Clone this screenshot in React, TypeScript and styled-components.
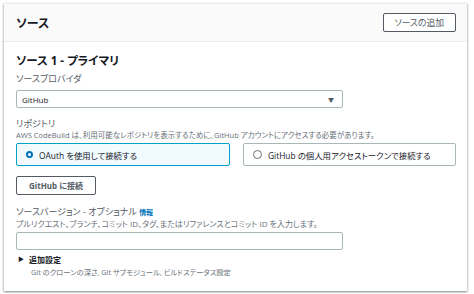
import { createGlobalStyle, styled } from 'styled-components';

const GlobalStyle = createGlobalStyle`
    html, body {
        margin: 0;
        padding: 0;
        background: #ffffff;
    }
    body {
        font-family: 'Open Sans', 'Noto Sans CJK JP', sans-serif;
        font-feature-settings: 'palt';
        color: #16191f;
    }
`;

interface TileProps {
    selected?: boolean;
}

export default function App() {
    return (
        <Page>
            <GlobalStyle />
            <Panel>
                <Header>
                    <Title>ソース</Title>
                    <Button>ソースの追加</Button>
                </Header>
                <Body>
                    <SubTitle>ソース 1 - プライマリ</SubTitle>
                    <Field top={4}>
                        <Label>ソースプロバイダ</Label>
                        <Select>
                            <span>GitHub</span>
                            <Caret>▼</Caret>
                        </Select>
                    </Field>
                    <Field top={10}>
                        <Label>リポジトリ</Label>
                        <Desc size={7.5}>
                            AWS CodeBuild は、利用可能なレポジトリを表示するために、GitHub アカウントにアクセスする必要があります。
                        </Desc>
                        <Tiles>
                            <Tile selected>
                                <Radio selected />
                                OAuth を使用して接続する
                            </Tile>
                            <Tile>
                                <Radio />
                                GitHub の個人用アクセストークンで接続する
                            </Tile>
                        </Tiles>
                    </Field>
                    <Field top={10}>
                        <Button bold>GitHub に接続</Button>
                    </Field>
                    <Field top={11}>
                        <Label>
                            ソースバージョン - オプショナル <Info>情報</Info>
                        </Label>
                        <Desc size={8}>
                            プルリクエスト、ブランチ、コミット ID、タグ、またはリファレンスとコミット ID を入力します。
                        </Desc>
                        <Input />
                    </Field>
                    <Field top={3}>
                        <ExpandRow>
                            <Arrow>▶</Arrow>
                            <span>追加設定</span>
                        </ExpandRow>
                        <ExpandDesc>Git のクローンの深さ, Git サブモジュール, ビルドステータス設定</ExpandDesc>
                    </Field>
                </Body>
            </Panel>
        </Page>
    );
}

const Page = styled.div`
    width: 474px;
    height: 294px;
    padding: 3px 7px 0 4px;
    box-sizing: border-box;
    overflow: hidden;
`;
const Panel = styled.div`
    width: 463px;
    height: 287px;
    background: #fff;
    box-shadow: 0 1px 2px 0 rgba(0, 28, 36, 0.3), 1px 1px 2px 0 rgba(0, 28, 36, 0.15),
        -1px 1px 2px 0 rgba(0, 28, 36, 0.15);
    border-top: 1px solid #eaeded;
`;
const Header = styled.div`
    display: grid;
    grid-template-columns: 1fr auto;
    align-items: center;
    height: 37px;
    padding: 0 11px 0 12px;
    background: #fafafa;
    border-bottom: 1px solid #eaeded;
`;
const Title = styled.div`
    font-size: 12px;
    font-weight: 700;
`;
const Button = styled.div<{ bold?: boolean }>`
    display: flex;
    align-items: center;
    justify-content: center;
    height: 19px;
    padding: 0 ${(p) => (p.bold ? '12px' : '11px')};
    border: 1px solid #545b64;
    border-radius: 2px;
    background: #fff;
    font-size: ${(p) => (p.bold ? '8px' : '8.8px')};
    font-weight: ${(p) => (p.bold ? 700 : 400)};
    color: #545b64;
    width: fit-content;
    box-sizing: border-box;
`;
const Body = styled.div`
    display: flex;
    flex-direction: column;
    align-items: stretch;
    padding: 11px 12px 0 12px;
`;
const SubTitle = styled.div`
    font-size: 11.5px;
    font-weight: 700;
    line-height: 16px;
`;
const Field = styled.div<{ top: number }>`
    display: flex;
    flex-direction: column;
    margin-top: ${(p) => p.top}px;
`;
const Label = styled.div`
    font-size: 9px;
    line-height: 12px;
    color: #545b64;
    margin-bottom: 5px;
`;
const Info = styled.span`
    font-size: 7px;
    font-weight: 700;
    color: #0073bb;
`;
const Desc = styled.div<{ size: number }>`
    font-size: ${(p) => p.size}px;
    line-height: 10px;
    color: #687078;
    margin-top: -5px;
    margin-bottom: 3px;
    white-space: nowrap;
`;
const Select = styled.div`
    display: flex;
    align-items: center;
    justify-content: space-between;
    width: 327px;
    height: 18px;
    box-sizing: border-box;
    padding: 0 8px 0 5px;
    border: 1px solid #aab7b8;
    border-radius: 2px;
    font-size: 8px;
`;
const Caret = styled.span`
    font-size: 6px;
    color: #545b64;
`;
const Tiles = styled.div`
    display: grid;
    grid-template-columns: 214px 213px;
    gap: 13px;
`;
const Tile = styled.div<TileProps>`
    display: flex;
    align-items: center;
    gap: 6px;
    height: 23px;
    box-sizing: border-box;
    padding: 0 9px;
    border: 1px solid ${(p) => (p.selected ? '#00a1c9' : '#aab7b8')};
    background: ${(p) => (p.selected ? '#f1faff' : '#fff')};
    border-radius: 2px;
    font-size: 8.4px;
    color: #16191f;
`;
const Radio = styled.span<TileProps>`
    width: ${(p) => (p.selected ? '3px' : '7px')};
    height: ${(p) => (p.selected ? '3px' : '7px')};
    border-radius: 50%;
    border: ${(p) => (p.selected ? '2.5px solid #0073bb' : '1px solid #687078')};
    background: #fff;
    flex: none;
`;
const Input = styled.div`
    width: 327px;
    height: 18px;
    box-sizing: border-box;
    border: 1px solid #aab7b8;
    border-radius: 2px;
`;
const ExpandRow = styled.div`
    display: flex;
    align-items: center;
    gap: 5px;
    font-size: 8px;
    font-weight: 700;
    line-height: 13px;
`;
const Arrow = styled.span`
    font-size: 6px;
    color: #16191f;
    padding-left: 2px;
`;
const ExpandDesc = styled.div`
    font-size: 7.3px;
    line-height: 12px;
    color: #687078;
    padding-left: 15px;
`;
